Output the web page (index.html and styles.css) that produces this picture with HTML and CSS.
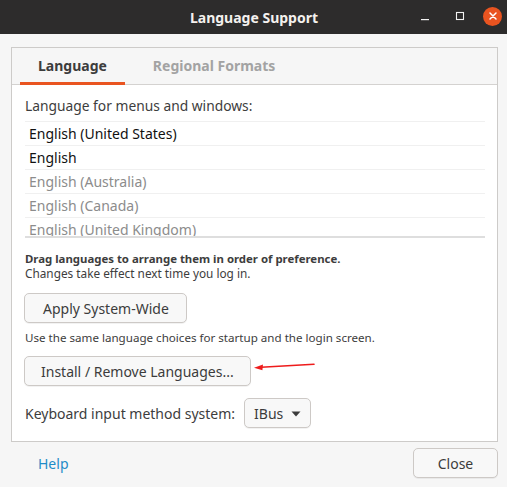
FILE: index.html
```html
<!DOCTYPE html>
<html lang="en">
<head>
<meta charset="utf-8">
<title>Language Support</title>
<link rel="stylesheet" href="styles.css">
</head>
<body>
<div class="window">
  <header class="titlebar">
    <div class="tb-spacer"></div>
    <div class="tb-title">Language Support</div>
    <div class="tb-controls">
      <svg class="ctl ctl-min" width="10" height="10" viewBox="0 0 10 10"><rect x="1" y="6" width="8" height="1.2" fill="#f2f2f2"/></svg>
      <svg class="ctl ctl-max" width="10" height="10" viewBox="0 0 10 10"><rect x="1.5" y="1.5" width="7" height="7" fill="none" stroke="#f2f2f2" stroke-width="1.1"/></svg>
      <span class="ctl-close"><svg width="10" height="10" viewBox="0 0 10 10"><path d="M2 2 L8 8 M8 2 L2 8" stroke="#fff" stroke-width="1.5" stroke-linecap="round"/></svg></span>
    </div>
  </header>

  <main class="main">
    <section class="notebook">
      <nav class="tabs">
        <div class="tab active">Language</div>
        <div class="tab">Regional Formats</div>
      </nav>
      <div class="page">
        <div class="label">Language for menus and windows:</div>
        <div class="langlist">
          <div class="row on">English (United States)</div>
          <div class="row on">English</div>
          <div class="row">English (Australia)</div>
          <div class="row">English (Canada)</div>
          <div class="row">English (United Kingdom)</div>
        </div>
        <div class="hint">
          <div class="hint-bold">Drag languages to arrange them in order of preference.</div>
          <div class="hint-reg">Changes take effect next time you log in.</div>
        </div>
        <div class="btn-row"><button class="btn apply">Apply System-Wide</button></div>
        <div class="hint single">Use the same language choices for startup and the login screen.</div>
        <div class="btn-row install">
          <button class="btn">Install / Remove Languages...</button>
          <svg class="arrow" width="62" height="12" viewBox="0 0 62 12">
            <path d="M61 2.2 L8 5.3" stroke="#ee1c1c" stroke-width="1.6" fill="none" stroke-linecap="round"/>
            <path d="M1 5.8 L10 2.6 L9.4 8.2 Z" fill="#ee1c1c"/>
          </svg>
        </div>
        <div class="kbd-row">
          <span class="kbd-label">Keyboard input method system:</span>
          <button class="combo">IBus <svg width="10" height="6" viewBox="0 0 10 6"><path d="M0.5 0.5 L9.5 0.5 L5 5.5 Z" fill="#3c3c3c"/></svg></button>
        </div>
      </div>
    </section>
    <footer class="actions">
      <a class="help" href="#">Help</a>
      <button class="btn close">Close</button>
    </footer>
  </main>
</div>
</body>
</html>
```

FILE: styles.css
```css
* { box-sizing: border-box; }
html, body { margin: 0; padding: 0; }
body {
  width: 507px;
  height: 487px;
  background: #f6f6f6;
  font-family: "Noto Sans", "Open Sans", sans-serif;
  color: #3d3d3d;
  overflow: hidden;
}
.window { width: 507px; height: 487px; display: flex; flex-direction: column; }

.titlebar {
  height: 34px;
  background: #2d2c2c;
  display: grid;
  grid-template-columns: 1fr auto 1fr;
  align-items: center;
  flex: none;
}
.tb-title {
  color: #f4f1ee;
  font-weight: 700;
  font-size: 14px;
  padding-left: 1px;
}
.tb-controls {
  display: flex;
  justify-content: flex-end;
  align-items: center;
  padding-right: 5px;
}
.ctl { display: block; }
.ctl-min { margin-right: 25px; margin-top: 2px; }
.ctl-max { margin-right: 18px; margin-top: -2px; }
.ctl-close {
  width: 19px; height: 19px; border-radius: 50%;
  background: #e95420;
  display: flex; align-items: center; justify-content: center;
  margin-top: -2px;
}
.ctl-close svg { display: block; }

.main {
  flex: 1;
  padding: 13px 9px 0 11px;
  display: flex;
  flex-direction: column;
}
.notebook {
  border: 1px solid #cdcbc9;
  background: #f6f6f6;
  height: 395px;
  display: flex;
  flex-direction: column;
}
.tabs {
  height: 37px;
  display: flex;
  padding-left: 8px;
  gap: 10px;
  border-bottom: 1px solid #d4d2d0;
  flex: none;
}
.tab {
  padding: 0 18px 3px;
  font-weight: 700;
  font-size: 14px;
  color: #a3a3a3;
  display: flex;
  align-items: center;
  margin-bottom: -1px;
}
.tab.active {
  color: #3c3c3c;
  box-shadow: inset 0 -3px 0 #e95420;
}
.page {
  flex: 1;
  background: #ffffff;
  padding: 11px 12px 0 13px;
  display: flex;
  flex-direction: column;
}
.label { font-size: 13.8px; line-height: 20px; }
.langlist {
  margin-top: 5px;
  height: 117px;
  overflow: hidden;
  border-bottom: 2px solid #dedede;
}
.row {
  height: 24px;
  border-top: 1px solid #f0f0f0;
  padding-left: 4px;
  font-size: 14px;
  line-height: 23px;
  color: #8c8c8c;
}
.row.on { color: #111111; }

.hint { font-size: 11.4px; line-height: 15px; margin-top: 13px; }
.hint-bold { font-weight: 700; }
.hint-reg { font-size: 11.8px; }
.hint.single { margin-top: 7px; font-size: 11.6px; }

.btn-row { display: flex; align-items: center; margin-top: 12px; }
.btn {
  font-family: inherit;
  font-size: 14px;
  color: #3c3c3c;
  background: #f8f8f8;
  border: 1px solid #cdc9c6;
  border-radius: 5px;
  height: 30px;
  padding: 0 16px;
  box-shadow: 0 1px 0 rgba(0,0,0,0.05);
  margin-left: -1px;
}
.btn.apply { padding: 0 17px 0 18px; }
.btn-row.install { margin-top: 11px; }
.arrow { margin-left: 2px; margin-top: -6px; }

.kbd-row { display: flex; align-items: center; margin-top: 12px; }
.kbd-label { font-size: 14px; margin-right: 9px; }
.combo {
  font-family: inherit;
  font-size: 14px;
  color: #3c3c3c;
  background: #f8f8f8;
  border: 1px solid #cdc9c6;
  border-radius: 5px;
  height: 30px;
  width: 67px;
  padding: 0 9px;
  display: flex;
  align-items: center;
  justify-content: space-between;
  box-shadow: 0 1px 0 rgba(0,0,0,0.05);
}
.combo svg { display: block; margin-top: 1px; }

.actions {
  display: flex;
  justify-content: space-between;
  align-items: center;
  padding: 6px 0 0 27px;
}
.help {
  color: #1e8cc8;
  text-decoration: none;
  font-size: 14px;
}
.btn.close { width: 85px; padding: 0; margin-left: 0; }
```
